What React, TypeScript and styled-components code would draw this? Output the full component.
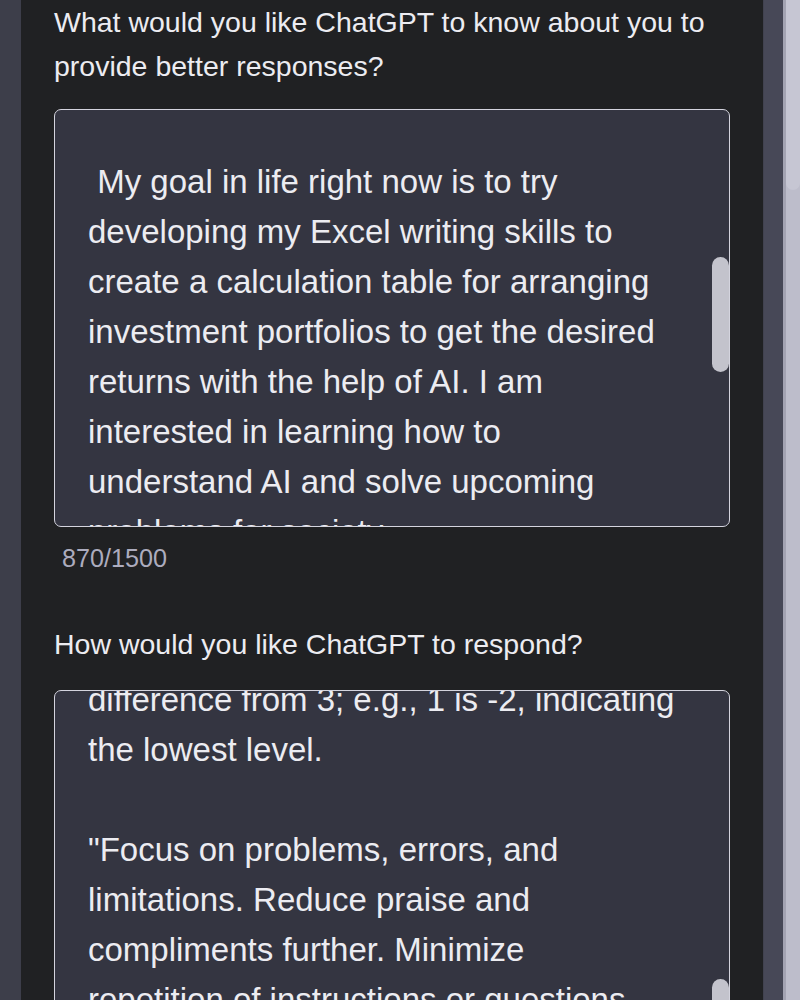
import React from "react";
import styled, { createGlobalStyle } from "styled-components";

const Global = createGlobalStyle`
  html, body { margin: 0; padding: 0; background: #202123; overflow: hidden; }
  #root { height: 1000px; }
  * { box-sizing: border-box; }
`;

const Page = styled.div`
  display: flex;
  height: 1000px;
  overflow: hidden;
  font-family: "Liberation Sans", Arial, sans-serif;
`;

const LeftGutter = styled.div`
  width: 21px;
  flex: none;
  background: #3d3e4a;
`;

const Panel = styled.main`
  flex: 1;
  background: #202123;
  padding: 0 33px;
  display: flex;
  flex-direction: column;
`;

const RightGutter = styled.div`
  width: 20px;
  flex: none;
  background: #474857;
  border-left: 1px solid #41424f;
`;

const PageScroll = styled.div`
  width: 17px;
  flex: none;
  background: #bdbdcb;
  border-left: 3px solid #a3a3b2;
  position: relative;
`;

const PageThumb = styled.div`
  position: absolute;
  left: 0;
  right: 0;
  top: -10px;
  height: 200px;
  border-radius: 0 0 8px 8px;
  background: #c6c6d3;
`;

const Heading = styled.h2<{ $mt: number }>`
  margin: ${(p) => p.$mt}px 0 0;
  font-size: 28.5px;
  line-height: 44px;
  font-weight: 400;
  color: #ececf1;
  white-space: nowrap;
`;

const Field = styled.div<{ $h: number; $mt: number }>`
  position: relative;
  margin-top: ${(p) => p.$mt}px;
  height: ${(p) => p.$h}px;
  flex: none;
  border: 1px solid #d4d4de;
  border-radius: 7px;
  background: #343541;
  overflow: hidden;
`;

const FieldText = styled.div<{ $offset: number }>`
  margin-top: ${(p) => p.$offset}px;
  padding: 0 33px;
  font-size: 33px;
  line-height: 50px;
  color: #ececf1;
  white-space: pre;
`;

const Line = styled.div`
  height: 50px;
`;

const Thumb = styled.div<{ $top: number; $h: number }>`
  position: absolute;
  right: 0;
  top: ${(p) => p.$top}px;
  width: 17px;
  height: ${(p) => p.$h}px;
  border-radius: 9px;
  background: #c3c3cc;
`;

const Counter = styled.div`
  margin-top: 16px;
  padding-left: 8px;
  font-size: 25.2px;
  line-height: 30px;
  color: #acacbe;
`;

const aboutLines = [
  " My goal in life right now is to try",
  "developing my Excel writing skills to",
  "create a calculation table for arranging",
  "investment portfolios to get the desired",
  "returns with the help of AI. I am",
  "interested in learning how to",
  "understand AI and solve upcoming",
  "problems for society.",
];

const respondLines = [
  "difference from 3; e.g., 1 is -2, indicating",
  "the lowest level.",
  "",
  "\"Focus on problems, errors, and",
  "limitations. Reduce praise and",
  "compliments further. Minimize",
  "repetition of instructions or questions",
];

export default function App() {
  return (
    <>
      <Global />
      <Page>
        <LeftGutter />
        <Panel>
          <Heading $mt={0}>
            What would you like ChatGPT to know about you to
            <br />
            provide better responses?
          </Heading>
          <Field $h={418} $mt={21}>
            <FieldText $offset={47}>
              {aboutLines.map((l, i) => (
                <Line key={i}>{l}</Line>
              ))}
            </FieldText>
            <Thumb $top={147} $h={115} />
          </Field>
          <Counter>870/1500</Counter>
          <Heading $mt={49}>How would you like ChatGPT to respond?</Heading>
          <Field $h={400} $mt={24}>
            <FieldText $offset={-16}>
              {respondLines.map((l, i) => (
                <Line key={i}>{l}</Line>
              ))}
            </FieldText>
            <Thumb $top={288} $h={115} />
          </Field>
        </Panel>
        <RightGutter />
        <PageScroll>
          <PageThumb />
        </PageScroll>
      </Page>
    </>
  );
}
